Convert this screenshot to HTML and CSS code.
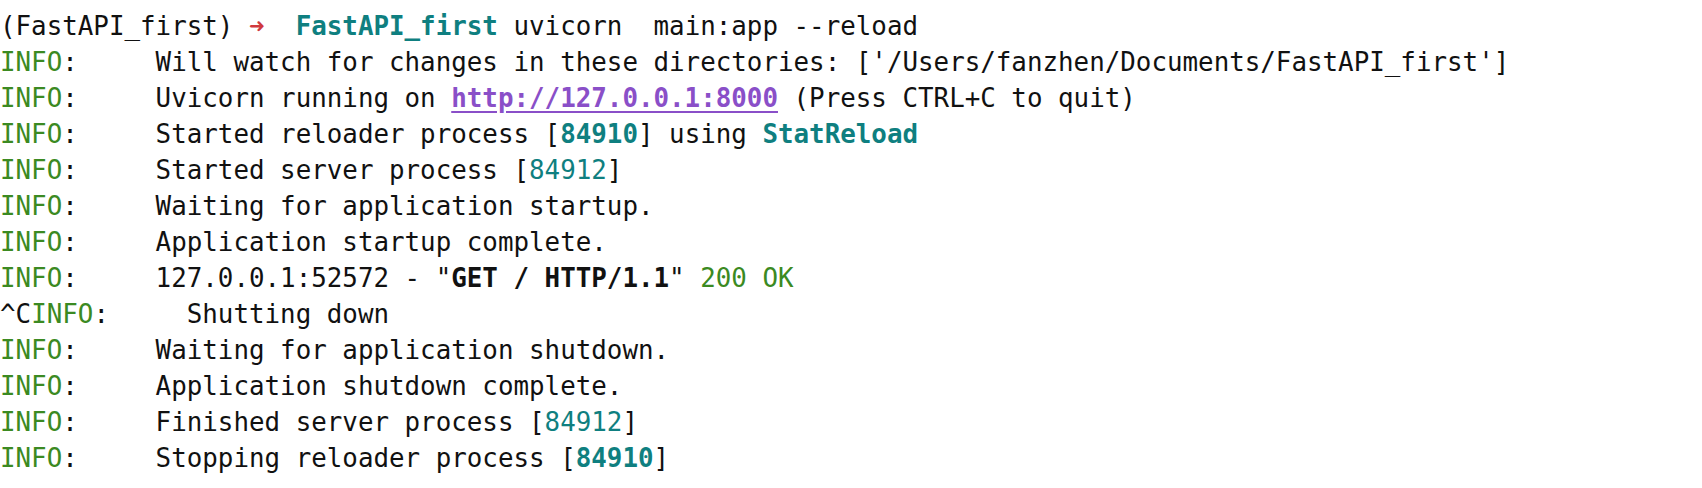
FILE: index.html
```html
<!DOCTYPE html>
<html>
<head>
<meta charset="utf-8">
<link rel="stylesheet" href="styles.css">
</head>
<body>
<pre class="term"><span class="line">(FastAPI_first) <b class="arrow">➜</b>  <b class="teal">FastAPI_first</b> uvicorn  main:app --reload</span>
<span class="line"><span class="info">INFO</span>:     Will watch for changes in these directories: ['/Users/fanzhen/Documents/FastAPI_first']</span>
<span class="line"><span class="info">INFO</span>:     Uvicorn running on <b class="link">http://127.0.0.1:8000</b> (Press CTRL+C to quit)</span>
<span class="line"><span class="info">INFO</span>:     Started reloader process [<b class="teal">84910</b>] using <b class="teal">StatReload</b></span>
<span class="line"><span class="info">INFO</span>:     Started server process [<span class="teal">84912</span>]</span>
<span class="line"><span class="info">INFO</span>:     Waiting for application startup.</span>
<span class="line"><span class="info">INFO</span>:     Application startup complete.</span>
<span class="line"><span class="info">INFO</span>:     127.0.0.1:52572 - "<b>GET / HTTP/1.1</b>" <span class="info">200 OK</span></span>
<span class="line">^C<span class="info">INFO</span>:     Shutting down</span>
<span class="line"><span class="info">INFO</span>:     Waiting for application shutdown.</span>
<span class="line"><span class="info">INFO</span>:     Application shutdown complete.</span>
<span class="line"><span class="info">INFO</span>:     Finished server process [<span class="teal">84912</span>]</span>
<span class="line"><span class="info">INFO</span>:     Stopping reloader process [<b class="teal">84910</b>]</span></pre>
</body>
</html>
```
FILE: styles.css
```css
html, body {
  margin: 0;
  background: #ffffff;
}
body {
  padding: 8px 0 0 0;
}
.term {
  margin: 0;
  font-family: "DejaVu Sans Mono", "Liberation Mono", monospace;
  font-size: 25.85px;
  line-height: 36px;
  color: #111111;
  white-space: pre;
}
.term b {
  font-weight: bold;
}
.info {
  color: #3b8a22;
}
.teal {
  color: #0f7f80;
}
.arrow {
  color: #d0393e;
}
.link {
  color: #8a4fc8;
  text-decoration: underline;
  text-underline-offset: 4px;
}
```
